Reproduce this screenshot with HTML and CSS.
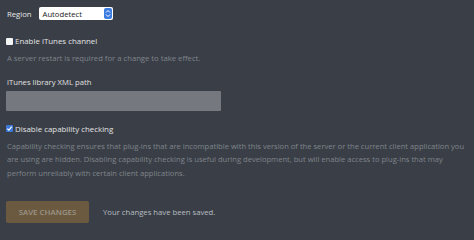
FILE: index.html
```html
<!DOCTYPE html>
<html>
<head>
<meta charset="utf-8">
<link rel="stylesheet" href="styles.css">
</head>
<body>
<div class="page">
  <div class="row region">
    <span class="label">Region</span>
    <span class="select"><span class="select-text">Autodetect</span><span class="stepper"><svg width="6" height="9" viewBox="0 0 6 9"><path d="M1 3.5 L3 1.5 L5 3.5 M1 5.5 L3 7.5 L5 5.5" fill="none" stroke="#fff" stroke-width="1"/></svg></span></span>
  </div>
  <div class="check-row first">
    <span class="box"></span>
    <span class="check-label">Enable iTunes channel</span>
  </div>
  <p class="help">A server restart is required for a change to take effect.</p>
  <div class="field-label">iTunes library XML path</div>
  <div class="input"></div>
  <div class="check-row second">
    <span class="box checked"><svg width="7" height="7" viewBox="0 0 7 7"><path d="M1.3 3.6 L2.9 5.2 L5.8 1.6" fill="none" stroke="#fff" stroke-width="1.2"/></svg></span>
    <span class="check-label">Disable capability checking</span>
  </div>
  <p class="help para">Capability checking ensures that plug-ins that are incompatible with this version of the server or the current client application you are using are hidden. Disabling capability checking is useful during development, but will enable access to plug-ins that may perform unreliably with certain client applications.</p>
  <div class="actions">
    <span class="btn">SAVE CHANGES</span>
    <span class="saved">Your changes have been saved.</span>
  </div>
</div>
</body>
</html>
```
FILE: styles.css
```css
html, body {
  margin: 0;
  padding: 0;
  background: #3a3f47;
}
body {
  font-family: "Open Sans", "Liberation Sans", sans-serif;
  font-size: 7.7px;
  color: #e4e4e4;
  width: 474px;
  height: 240px;
  overflow: hidden;
}
.page {
  padding: 7px 0 0 7px;
}
.row.region {
  display: flex;
  align-items: center;
  gap: 7px;
  height: 13px;
}
.label {
  color: #e8e8e8;
}
.select {
  display: flex;
  align-items: center;
  width: 74px;
  height: 13px;
  background: #fff;
  border-radius: 2px;
  box-sizing: border-box;
  padding-left: 4px;
  color: #222;
}
.select-text {
  flex: 1;
}
.stepper {
  width: 8px;
  height: 11px;
  margin-right: 1px;
  background: #3b7ce0;
  border-radius: 2px;
  display: flex;
  align-items: center;
  justify-content: center;
}
.check-row {
  display: flex;
  align-items: center;
  gap: 2px;
  margin-left: -1px;
  height: 12px;
}
.check-row.first {
  margin-top: 15px;
}
.box {
  width: 7px;
  height: 7px;
  background: #f4f4f4;
  border-radius: 1px;
  display: flex;
  align-items: center;
  justify-content: center;
}
.box.checked {
  background: #3b78d8;
}
.check-label {
  color: #e2e2e2;
  font-size: 7.9px;
}
.help {
  margin: 5px 0 0 0;
  color: #7f848b;
  line-height: 13.5px;
}
.field-label {
  margin-top: 11px;
  color: #e0e0e0;
}
.input {
  margin-top: 4px;
  margin-left: -1px;
  width: 215px;
  height: 20px;
  background: #75787e;
  border-radius: 1px;
}
.check-row.second {
  margin-top: 12px;
}
.para {
  margin-top: 5px;
  width: 466px;
  font-size: 7.6px;
}
.actions {
  display: flex;
  align-items: center;
  gap: 14px;
  margin-top: 21px;
  margin-left: -1px;
}
.btn {
  width: 83px;
  height: 22px;
  box-sizing: border-box;
  background: #6b5a3f;
  color: #9c948a;
  font-weight: 600;
  font-size: 7.9px;
  border-radius: 2px;
  display: flex;
  align-items: center;
  justify-content: center;
}
.saved {
  color: #b8bcc2;
}
```
